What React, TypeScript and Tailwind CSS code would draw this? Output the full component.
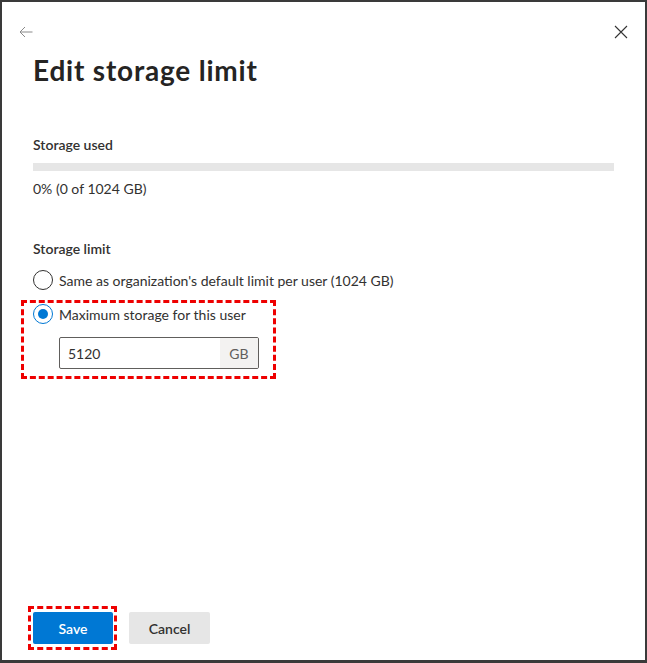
import React from 'react';

const font = { fontFamily: '"Segoe UI", Lato, "Liberation Sans", sans-serif' };

function BackArrow() {
  return (
    <svg width="14" height="12" viewBox="0 0 14 12" fill="none" stroke="#8a8a8a" strokeWidth="1">
      <path d="M13.5 6H1M6 1L1 6l5 5" />
    </svg>
  );
}

function CloseIcon() {
  return (
    <svg width="14" height="14" viewBox="0 0 14 14" fill="none" stroke="#333" strokeWidth="1.1">
      <path d="M1 1l12 12M13 1L1 13" />
    </svg>
  );
}

function Radio({ checked, label }: { checked?: boolean; label: string }) {
  return (
    <label className="flex h-5 items-center gap-[6px] text-[14px] text-[#323130]">
      <span
        className={
          checked
            ? 'flex h-5 w-5 items-center justify-center rounded-full border border-[#0078d4]'
            : 'flex h-5 w-5 items-center justify-center rounded-full border border-[#323130]'
        }
      >
        {checked && <span className="h-[10px] w-[10px] rounded-full bg-[#0078d4]" />}
      </span>
      <span>{label}</span>
    </label>
  );
}

export default function App() {
  return (
    <div
      className="flex h-[663px] w-[647px] flex-col border-2 border-b-[3px] border-[#3a3a3a] bg-white"
      style={font}
    >
      <div className="flex items-start justify-between pl-[17px] pr-[17px] pt-[23px]">
        <span className="mt-[1px]">
          <BackArrow />
        </span>
        <CloseIcon />
      </div>

      <div className="flex flex-1 flex-col px-[31px]">
        <h1 className="mt-[13px] text-[28px] leading-[36px] font-bold tracking-[0.8px] text-[#252423]">
          Edit storage limit
        </h1>

        <div className="mt-[47px] text-[14px] leading-5 font-semibold text-[#323130]">Storage used</div>
        <div className="mt-[8px] h-[8px] w-full bg-[#e6e6e6]" />
        <div className="mt-[8px] text-[14px] leading-5 text-[#323130]">0% (0 of 1024 GB)</div>

        <div className="mt-[40px] text-[14px] leading-5 font-semibold text-[#323130]">Storage limit</div>
        <div className="mt-[11px]">
          <Radio label="Same as organization's default limit per user (1024 GB)" />
        </div>

        <div className="-ml-[12px] mt-[10px] w-fit border-[3px] border-dashed border-[#ee0000] pb-[7px] pl-[9px] pr-[14px] pt-[1px]">
          <Radio checked label="Maximum storage for this user" />
          <div className="ml-[26px] mt-[13px] flex h-[32px] w-[200px] overflow-hidden rounded-[2px] border border-[#605e5c]">
            <div className="flex flex-1 items-center px-2 text-[14px] text-[#323130]">5120</div>
            <div className="flex w-[38px] items-center justify-center bg-[#f3f2f1] text-[14px] text-[#605e5c]">GB</div>
          </div>
        </div>

        <div className="mt-auto mb-[10px] flex items-center gap-[12px]">
          <div className="-ml-[5px] border-[3px] border-dashed border-[#ee0000] py-[3px] pl-[2px] pr-[1px]">
            <button className="h-[32px] w-[80px] rounded-[2px] bg-[#0078d4] text-[14px] font-semibold text-white">
              Save
            </button>
          </div>
          <button className="h-[32px] w-[81px] rounded-[2px] bg-[#e6e6e6] text-[14px] font-semibold text-[#323130]">
            Cancel
          </button>
        </div>
      </div>
    </div>
  );
}
